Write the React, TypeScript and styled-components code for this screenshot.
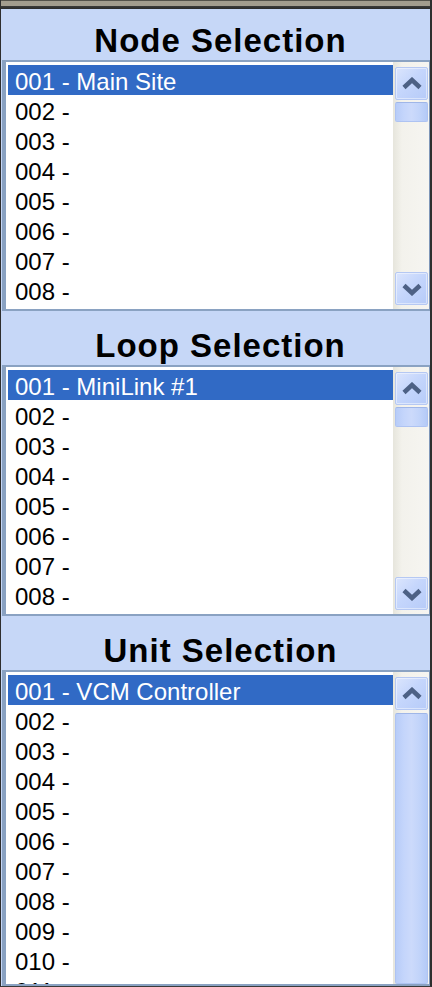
import React from "react";
import styled, { createGlobalStyle } from "styled-components";

const GlobalStyle = createGlobalStyle`
  html, body { margin: 0; padding: 0; background: #ffffff; }
  body { font-family: "Liberation Sans", Arial, sans-serif; }
  #root { width: 432px; height: 987px; }
`;

const Frame = styled.div`
  width: 432px;
  height: 987px;
  box-sizing: border-box;
  border-left: 1px solid #2e2e2e;
  border-right: 2px solid #2e2e2e;
  border-bottom: 1px solid #3a3a3a;
  display: flex;
  flex-direction: column;
  overflow: hidden;
  background: #c6d7f7;
`;

const TopBar = styled.div`
  height: 9px;
  flex-shrink: 0;
  background: linear-gradient(
    to bottom,
    #55534b 0px,
    #55534b 1px,
    #a39d8e 1px,
    #a39d8e 6px,
    #3c3c3a 6px,
    #2c2c2c 9px
  );
`;

const Header = styled.div<{ $h: number }>`
  height: ${(p) => p.$h}px;
  flex-shrink: 0;
  box-sizing: border-box;
  display: flex;
  align-items: flex-end;
  justify-content: center;
  padding: 0 0 3px 10px;
  background: #c6d7f7;
  color: #000;
  font-family: "Liberation Sans", Arial, sans-serif;
  font-weight: bold;
  font-size: 33px;
  line-height: 33px;
  letter-spacing: 1px;
  white-space: nowrap;
`;

const ListBox = styled.div<{ $h?: number }>`
  ${(p) => (p.$h ? `height: ${p.$h}px; flex-shrink: 0;` : `flex: 1; min-height: 0;`)}
  margin-left: 1px;
  box-sizing: border-box;
  border-top: 2px solid #8aa2c2;
  border-bottom: 2px solid #8aa2c2;
  border-left: 4px solid #8aa2c2;
  border-right: 1px solid #7f97b8;
  padding-left: 2px;
  background: #ffffff;
  display: flex;
  overflow: hidden;
`;

const Rows = styled.div`
  flex: 1;
  min-width: 0;
  padding-top: 3px;
  overflow: hidden;
`;

const Row = styled.div<{ $sel?: boolean }>`
  height: 30px;
  box-sizing: border-box;
  padding: 2px 0 0 7px;
  line-height: 30px;
  font-family: "Liberation Sans", Arial, sans-serif;
  font-size: 24px;
  white-space: nowrap;
  background: ${(p) => (p.$sel ? "#316ac5" : "transparent")};
  color: ${(p) => (p.$sel ? "#ffffff" : "#000000")};
`;

const Track = styled.div<{ $long?: boolean }>`
  width: 36px;
  flex-shrink: 0;
  box-sizing: border-box;
  display: flex;
  flex-direction: column;
  padding: 5px 1px ${(p) => (p.$long ? 0 : 4)}px 2px;
  background: linear-gradient(to right, #e6e5dc 0%, #f3f2ec 25%, #f6f5f1 100%);
`;

const ArrowButton = styled.div`
  height: 33px;
  flex-shrink: 0;
  box-sizing: border-box;
  border: 1px solid #b5c8f3;
  border-radius: 2px;
  background: linear-gradient(135deg, #dbe5fd 0%, #c5d6fc 45%, #b6cbf8 100%);
  box-shadow: inset 0 0 0 1px rgba(255, 255, 255, 0.45);
  display: flex;
  align-items: center;
  justify-content: center;
`;

const Thumb = styled.div<{ $long?: boolean }>`
  margin-top: ${(p) => (p.$long ? 3 : 2)}px;
  ${(p) => (p.$long ? "flex: 1;" : "height: 20px; flex-shrink: 0;")}
  box-sizing: border-box;
  border: 1px solid #aec3f2;
  border-top-color: #9fb6e8;
  border-radius: 2px;
  background: linear-gradient(
    to right,
    #b7ccf8 0%,
    #c4d5fb 25%,
    #ccdafb 50%,
    #c2d4fa 75%,
    #b4caf7 100%
  );
`;

const Spacer = styled.div`
  flex: 1;
`;

const Arrow: React.FC<{ down?: boolean }> = ({ down }) => (
  <svg width="22" height="14" viewBox="0 0 22 14">
    <polyline
      points={down ? "3,3.5 11,11 19,3.5" : "3,10.5 11,3 19,10.5"}
      fill="none"
      stroke="#4d6185"
      strokeWidth="4.5"
      strokeLinejoin="miter"
    />
  </svg>
);

type SectionProps = {
  title: string;
  headerH: number;
  listH?: number;
  items: string[];
  longThumb?: boolean;
};

const Section: React.FC<SectionProps> = ({ title, headerH, listH, items, longThumb }) => (
  <>
    <Header $h={headerH}>{title}</Header>
    <ListBox $h={listH}>
      <Rows>
        {items.map((t, i) => (
          <Row key={i} $sel={i === 0}>
            {t}
          </Row>
        ))}
      </Rows>
      <Track $long={longThumb}>
        <ArrowButton>
          <Arrow />
        </ArrowButton>
        {longThumb ? (
          <Thumb $long />
        ) : (
          <>
            <Thumb />
            <Spacer />
            <ArrowButton>
              <Arrow down />
            </ArrowButton>
          </>
        )}
      </Track>
    </ListBox>
  </>
);

const numbered = (first: string, count: number) =>
  Array.from({ length: count }, (_, i) => {
    const n = String(i + 1).padStart(3, "0");
    return i === 0 ? `${n} - ${first}` : `${n} -`;
  });

export default function App() {
  return (
    <>
      <GlobalStyle />
      <Frame>
        <TopBar />
        <Section title="Node Selection" headerH={51} listH={251} items={numbered("Main Site", 8)} />
        <Section title="Loop Selection" headerH={54} listH={251} items={numbered("MiniLink #1", 8)} />
        <Section title="Unit Selection" headerH={54} items={numbered("VCM Controller", 11)} longThumb />
      </Frame>
    </>
  );
}
